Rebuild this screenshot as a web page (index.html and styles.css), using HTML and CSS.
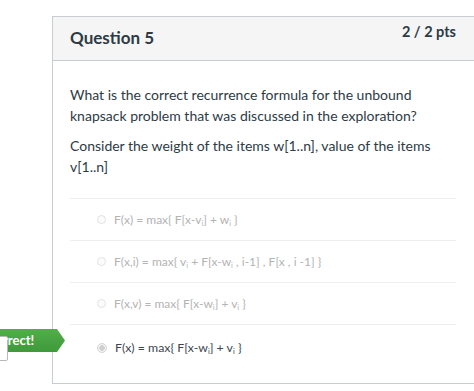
FILE: index.html
```html
<!DOCTYPE html>
<html>
<head>
<meta charset="utf-8">
<link rel="stylesheet" href="styles.css">
</head>
<body>
<div class="card">
  <div class="card-header">
    <h2 class="q-title">Question 5</h2>
    <div class="q-pts">2 / 2 pts</div>
  </div>
  <div class="card-body">
    <p class="q-text">What is the correct recurrence formula for the unbound knapsack problem that was discussed in the exploration?</p>
    <p class="q-text">Consider the weight of the items w[1..n], value of the items v[1..n]</p>
    <div class="answers">
      <div class="answer">
        <span class="radio"></span>
        <span class="ans-text">F(x) = max{ F[x-v<sub>i</sub>] + w<sub>i</sub> }</span>
      </div>
      <div class="answer">
        <span class="radio"></span>
        <span class="ans-text">F(x,i) = max{ v<sub>i</sub> + F[x-w<sub>i</sub> , i-1] , F[x , i -1] }</span>
      </div>
      <div class="answer">
        <span class="radio"></span>
        <span class="ans-text">F(x,v) = max{ F[x-w<sub>i</sub>] + v<sub>i</sub> }</span>
      </div>
      <div class="answer selected">
        <span class="radio checked"></span>
        <span class="ans-text">F(x) = max{ F[x-w<sub>i</sub>] + v<sub>i</sub> }</span>
        <div class="badge"></div>
        <div class="badge-box"></div>
        <div class="badge-label">Correct!</div>
      </div>
    </div>
  </div>
</div>
</body>
</html>
```
FILE: styles.css
```css
html, body {
  margin: 0;
  padding: 0;
  background: #fff;
}
body {
  font-family: Lato, "Liberation Sans", sans-serif;
  color: #2d3b45;
  padding-top: 16px;
  overflow: hidden;
}
.card {
  margin-left: 52px;
  border: 1px solid #c7cdd1;
  border-right: none;
  height: 368px;
  box-sizing: border-box;
}
.card-header {
  display: flex;
  justify-content: space-between;
  align-items: flex-start;
  background: #f5f5f5;
  border-bottom: 1px solid #c7cdd1;
  height: 43px;
  padding: 0 18px 0 17px;
}
.q-title {
  margin: 0;
  font-size: 17px;
  font-weight: 700;
  line-height: 20px;
  padding-top: 11px;
  color: #2d3b45;
}
.q-pts {
  font-size: 14.5px;
  font-weight: 700;
  line-height: 18px;
  padding-top: 6px;
  color: #2d3b45;
}
.card-body {
  padding: 23px 18px 0 17px;
}
.q-text {
  margin: 0 0 9px 0;
  font-size: 14px;
  line-height: 21px;
}
.answers {
  margin-top: 21px;
}
.answer {
  position: relative;
  display: flex;
  align-items: center;
  height: 41px;
  border-top: 1px solid #eeeeee;
  padding-left: 27px;
  font-size: 12px;
  color: #b3b3b3;
}
.answer.selected {
  color: #3b4650;
  font-size: 12.3px;
  padding-top: 2px;
}
.radio {
  width: 9px;
  height: 9px;
  border: 1px solid #e3e3e3;
  border-radius: 50%;
  margin-right: 8px;
  box-sizing: border-box;
  background: #fbfbfb;
}
.radio.checked {
  width: 10px;
  height: 10px;
  border: 1px solid #d4d4d4;
  background: radial-gradient(circle, #cfcfcf 0 2.5px, #f3f3f3 3px);
}
sub {
  font-size: 7.5px;
  vertical-align: -2px;
  line-height: 0;
}
.badge {
  position: absolute;
  left: -97px;
  top: 4px;
  height: 23px;
  width: 92px;
  background: linear-gradient(#52ad4a, #3e9a3a);
  clip-path: polygon(0 0, 84px 0, 92px 50%, 84px 100%, 0 100%);
}
.badge-label {
  position: absolute;
  left: -83px;
  top: 4px;
  color: #fff;
  font-size: 13px;
  font-weight: 700;
  line-height: 22px;
  white-space: nowrap;
}
.badge-box {
  position: absolute;
  left: -80px;
  top: 11px;
  width: 18px;
  height: 25px;
  background: #fff;
  border: 1px solid #b8b8b8;
  border-radius: 2px;
  box-sizing: border-box;
}
```
